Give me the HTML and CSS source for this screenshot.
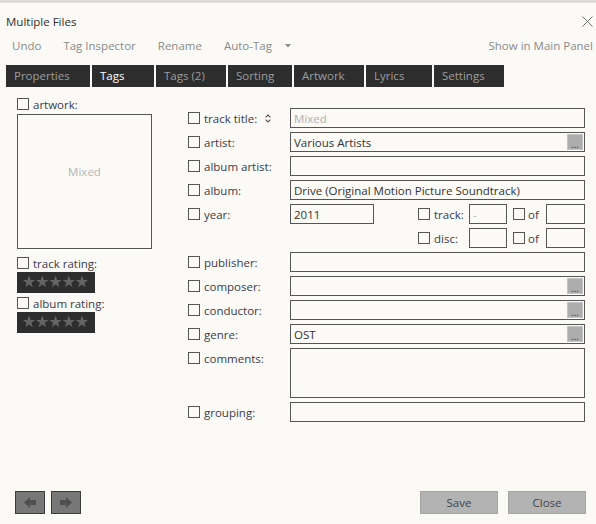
FILE: index.html
```html
<!DOCTYPE html>
<html lang="en">
<head>
  <meta charset="UTF-8">
  <title>Multiple Files</title>
  <link rel="stylesheet" href="styles.css">
</head>
<body>
  <svg class="defs" width="0" height="0">
    <defs>
      <polygon id="star" points="0,-6.5 1.53,-2.1 6.18,-2.01 2.47,0.8 3.82,5.26 0,2.6 -3.82,5.26 -2.47,0.8 -6.18,-2.01 -1.53,-2.1"/>
    </defs>
  </svg>

  <div class="window">
    <div class="titlebar">
      <span class="title">Multiple Files</span>
      <svg class="close-x" width="11" height="11" viewBox="0 0 11 11">
        <path d="M0.5 0.5L10.5 10.5M10.5 0.5L0.5 10.5" stroke="#707070" stroke-width="1" fill="none"/>
      </svg>
    </div>

    <div class="menu">
      <span>Undo</span>
      <span>Tag Inspector</span>
      <span>Rename</span>
      <span class="drop">Auto-Tag
        <svg width="6" height="4" viewBox="0 0 6 4"><polygon points="0,0 6,0 3,3.5" fill="#8a8a8a"/></svg>
      </span>
      <span class="menu-right">Show in Main Panel</span>
    </div>

    <div class="tabs">
      <div class="tab tab-properties">Properties</div>
      <div class="tab tab-tags active">Tags</div>
      <div class="tab tab-tags2">Tags (2)</div>
      <div class="tab tab-sorting">Sorting</div>
      <div class="tab tab-artwork">Artwork</div>
      <div class="tab tab-lyrics">Lyrics</div>
      <div class="tab tab-settings">Settings</div>
    </div>

    <div class="content">
      <div class="left">
        <div class="check-row"><span class="check"></span>artwork:</div>
        <div class="artwork">Mixed</div>

        <div class="check-row rating-label"><span class="check"></span>track rating:</div>
        <div class="rating">
          <svg width="78" height="21" viewBox="0 0 78 21">
            <use href="#star" x="12" y="10"/>
            <use href="#star" x="25.3" y="10"/>
            <use href="#star" x="38.5" y="10"/>
            <use href="#star" x="51.8" y="10"/>
            <use href="#star" x="65" y="10"/>
          </svg>
        </div>

        <div class="check-row rating-label second"><span class="check"></span>album rating:</div>
        <div class="rating">
          <svg width="78" height="21" viewBox="0 0 78 21">
            <use href="#star" x="12" y="10"/>
            <use href="#star" x="25.3" y="10"/>
            <use href="#star" x="38.5" y="10"/>
            <use href="#star" x="51.8" y="10"/>
            <use href="#star" x="65" y="10"/>
          </svg>
        </div>
      </div>

      <div class="fields">
        <div class="lbl"><span class="check"></span>track title:
          <svg class="spin" width="6" height="9" viewBox="0 0 6 9">
            <path d="M0.6 3.4L3 1L5.4 3.4M0.6 5.6L3 8L5.4 5.6" stroke="#555" stroke-width="1.1" fill="none"/>
          </svg>
        </div>
        <div class="field muted">Mixed</div>

        <div class="lbl"><span class="check"></span>artist:</div>
        <div class="field">Various Artists<span class="more">...</span></div>

        <div class="lbl"><span class="check"></span>album artist:</div>
        <div class="field"></div>

        <div class="lbl"><span class="check"></span>album:</div>
        <div class="field">Drive (Original Motion Picture Soundtrack)</div>

        <div class="lbl"><span class="check"></span>year:</div>
        <div class="split">
          <div class="field year">2011</div>
          <div class="nums">
            <div class="lbl"><span class="check"></span>track:</div>
            <div class="field muted">-</div>
            <div class="lbl of"><span class="check"></span>of</div>
            <div class="field"></div>
          </div>
        </div>

        <div></div>
        <div class="split">
          <div class="nums">
            <div class="lbl"><span class="check"></span>disc:</div>
            <div class="field"></div>
            <div class="lbl of"><span class="check"></span>of</div>
            <div class="field"></div>
          </div>
        </div>

        <div class="lbl"><span class="check"></span>publisher:</div>
        <div class="field"></div>

        <div class="lbl"><span class="check"></span>composer:</div>
        <div class="field"><span class="more">...</span></div>

        <div class="lbl"><span class="check"></span>conductor:</div>
        <div class="field"><span class="more">...</span></div>

        <div class="lbl"><span class="check"></span>genre:</div>
        <div class="field">OST<span class="more">...</span></div>

        <div class="lbl"><span class="check"></span>comments:</div>
        <div class="field tall"></div>

        <div class="lbl"><span class="check"></span>grouping:</div>
        <div class="field"></div>
      </div>
    </div>

    <div class="footer">
      <div class="nav">
        <div class="nav-btn">
          <svg width="12" height="11" viewBox="0 0 12 11"><polygon points="0,5.5 6,0 6,3 12,3 12,8 6,8 6,11" fill="#505050"/></svg>
        </div>
        <div class="nav-btn">
          <svg width="12" height="11" viewBox="0 0 12 11"><polygon points="12,5.5 6,0 6,3 0,3 0,8 6,8 6,11" fill="#505050"/></svg>
        </div>
      </div>
      <div class="actions">
        <div class="btn">Save</div>
        <div class="btn">Close</div>
      </div>
    </div>
  </div>
</body>
</html>
```

FILE: styles.css
```css
body {
  margin: 0;
  background: #fbfaf6;
  font-family: "Open Sans", "Noto Sans", sans-serif;
  font-size: 11.5px;
  color: #3a3a4a;
}
.defs {
  position: absolute;
}
#star {
  fill: #646464;
}
.window {
  height: 524px;
  box-sizing: border-box;
  border-top: 3px solid #dddcd9;
  display: flex;
  flex-direction: column;
}
.titlebar {
  height: 33px;
  box-sizing: border-box;
  padding: 3px 3px 0 6px;
  display: flex;
  align-items: center;
  justify-content: space-between;
}
.title {
  color: #2e2e2e;
}
.menu {
  height: 18px;
  display: flex;
  align-items: center;
  gap: 22px;
  padding: 0 3px 0 12px;
  color: #8a8a8a;
}
.drop svg {
  margin-left: 10px;
  vertical-align: middle;
}
.menu-right {
  margin-left: auto;
}
.tabs {
  margin: 11px 0 0 6px;
  display: flex;
  gap: 2px;
  height: 22px;
}
.tab {
  background: #2d2d2d;
  color: #9c9c9c;
  padding-left: 8px;
  line-height: 22px;
  box-sizing: border-box;
}
.tab.active {
  color: #fff;
}
.tab-properties { width: 84px; }
.tab-tags { width: 62px; }
.tab-tags2 { width: 70px; }
.tab-sorting { width: 64px; }
.tab-artwork { width: 70px; }
.tab-lyrics { width: 66px; }
.tab-settings { width: 70px; }

.content {
  flex: 1;
  display: flex;
  gap: 36px;
  padding-left: 17px;
}
.left {
  width: 135px;
  padding-top: 10px;
}
.check {
  width: 12px;
  height: 12px;
  border: 1px solid #555;
  box-sizing: border-box;
  flex: none;
}
.check-row {
  height: 14px;
  display: flex;
  align-items: center;
  gap: 4px;
}
.artwork {
  margin-top: 3px;
  width: 135px;
  height: 135px;
  box-sizing: border-box;
  border: 1px solid #555;
  padding-bottom: 20px;
  display: flex;
  align-items: center;
  justify-content: center;
  color: #b5b5b5;
}
.rating-label {
  margin-top: 7px;
}
.rating-label.second {
  margin-top: 3px;
}
.rating {
  margin-top: 2px;
  width: 78px;
  height: 21px;
  background: #2d2d2d;
}
.rating svg {
  display: block;
}

.fields {
  padding-top: 21px;
  display: grid;
  grid-template-columns: 102px 295px;
  row-gap: 4px;
  align-content: start;
}
.lbl {
  height: 20px;
  display: flex;
  align-items: center;
  gap: 4px;
  white-space: nowrap;
}
.spin {
  margin-left: 4px;
}
.field {
  height: 20px;
  box-sizing: border-box;
  border: 1px solid #555;
  padding: 0 3px;
  display: flex;
  align-items: center;
  color: #333;
  white-space: nowrap;
}
.field.muted {
  color: #b0b0b0;
}
.field.tall {
  height: 50px;
}
.more {
  margin-left: auto;
  margin-right: -2px;
  width: 16px;
  height: 16px;
  box-sizing: border-box;
  background: #adadad;
  border: 1px solid #c2c2c2;
  color: #444;
  font-size: 10px;
  line-height: 18px;
  text-align: center;
}
.split {
  display: flex;
}
.year {
  width: 84px;
}
.nums {
  margin-left: auto;
  display: grid;
  grid-template-columns: 51px 38px 39px 39px;
}
.lbl.of {
  padding-left: 6px;
  gap: 3px;
}

.footer {
  display: flex;
  align-items: flex-end;
  padding: 0 10px 10px 15px;
}
.nav {
  display: flex;
  gap: 6px;
}
.nav-btn {
  width: 30px;
  height: 23px;
  box-sizing: border-box;
  background: #777;
  border: 1px solid #3c3c3c;
  display: flex;
  align-items: center;
  justify-content: center;
}
.actions {
  margin-left: auto;
  display: flex;
  gap: 10px;
}
.btn {
  width: 78px;
  height: 23px;
  box-sizing: border-box;
  background: #b3b3b3;
  border: 1px solid #a4a4a4;
  color: #444;
  display: flex;
  align-items: center;
  justify-content: center;
}
```
